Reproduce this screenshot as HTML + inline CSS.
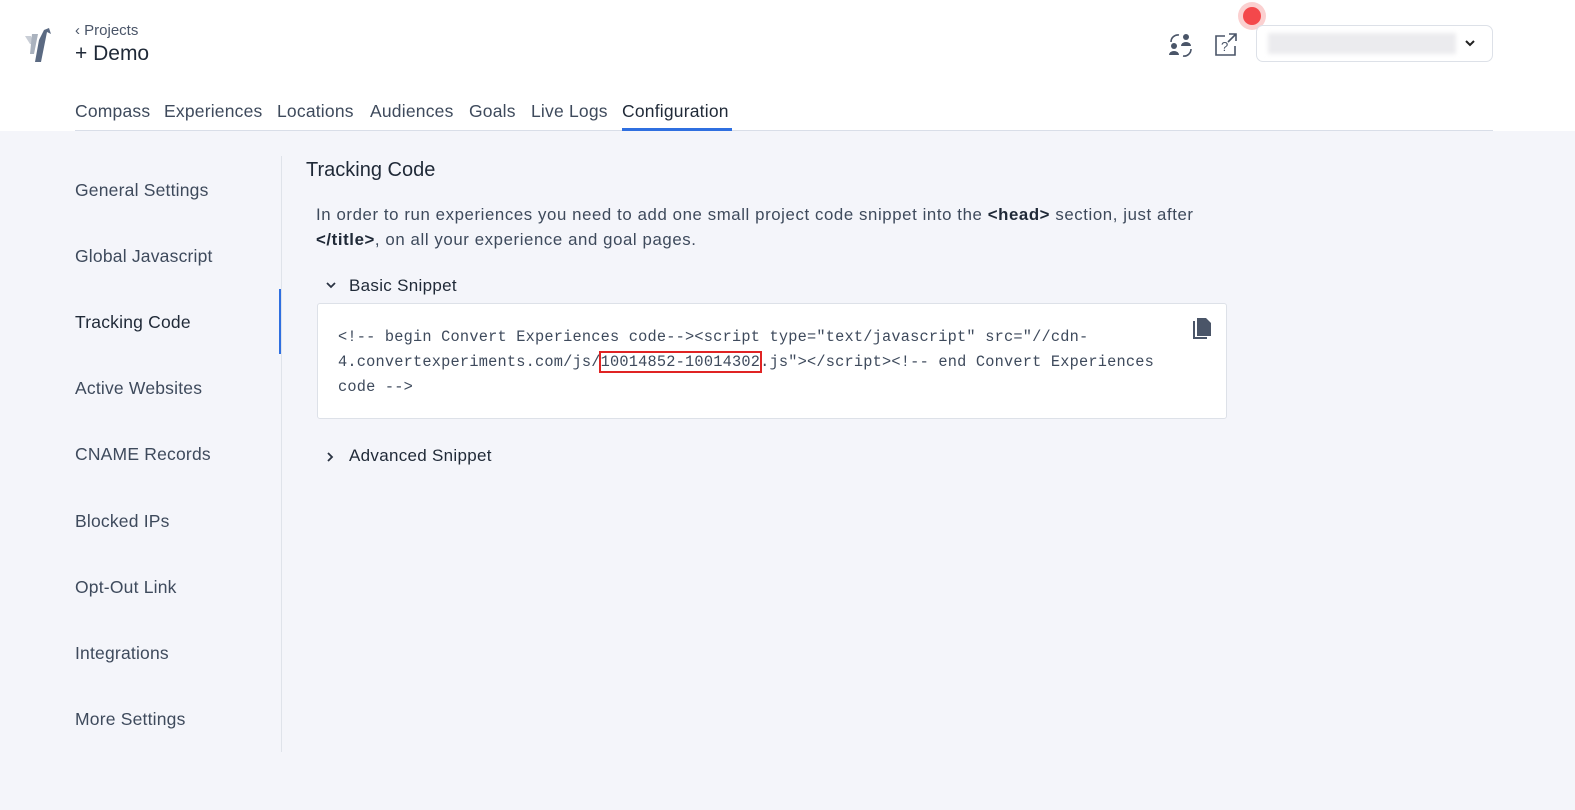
<!DOCTYPE html>
<html><head><meta charset="utf-8"><style>
*{box-sizing:border-box;margin:0;padding:0}
body{width:1575px;height:810px;background:#f4f5fa;font-family:"Liberation Sans",sans-serif;color:#2a3342;position:relative;overflow:hidden}
.top{position:absolute;left:0;top:0;width:1575px;height:131px;background:#fff}
.abs{position:absolute;white-space:nowrap}
.nav span{position:absolute;top:101px;font-size:17.5px;color:#3e4a5c;letter-spacing:0.2px}
.side{position:absolute;left:75px;font-size:17.5px;color:#3e4a5c;letter-spacing:0.2px}
</style></head><body>
<div class="top">
<svg class="abs" style="left:22px;top:24px" width="34" height="40" viewBox="0 0 34 40"><polygon points="3,12 9,12 12,20 8,20" fill="#c9ced6"/><polygon points="10,10 16,10 12,30 8,30" fill="#aab2be"/><polygon points="17,16 22,6 27,4 29,10 25,8 19,38 13,38" fill="#5b6a82"/></svg>
<div class="abs" style="left:75px;top:22px;font-size:15px;color:#4a5568">‹&nbsp;Projects</div>
<div class="abs" style="left:75px;top:42px;font-size:21px;color:#1f2937">+ Demo</div>
<div class="nav">
<span style="left:75px">Compass</span><span style="left:164px">Experiences</span><span style="left:277px">Locations</span><span style="left:370px">Audiences</span><span style="left:469px">Goals</span><span style="left:531px">Live Logs</span><span style="left:622px;color:#1f2937">Configuration</span>
</div>
<div class="abs" style="left:75px;top:130px;width:1418px;height:1px;background:#d9dee8"></div>
<div class="abs" style="left:622px;top:128px;width:110px;height:3px;background:#2f6fe0"></div>
<svg class="abs" style="left:1168px;top:32px" width="26" height="26" viewBox="0 0 26 26" fill="#4a5568"><circle cx="18" cy="5" r="3"/><path d="M13 14a5 4 0 0 1 10 0z"/><circle cx="6" cy="14" r="3"/><path d="M1 23a5 4 0 0 1 10 0z"/><path d="M3 10a7 7 0 0 1 8-7" stroke="#4a5568" stroke-width="1.6" fill="none"/><path d="M23 17a7 7 0 0 1-8 7" stroke="#4a5568" stroke-width="1.6" fill="none"/></svg>
<svg class="abs" style="left:1213px;top:32px" width="26" height="26" viewBox="0 0 26 26" fill="none" stroke="#4a5568" stroke-width="1.6"><path d="M12 4H3v19h19v-9"/><path d="M16 2h7v7M23 2l-8 8"/><text x="8" y="19" font-size="13" fill="#4a5568" stroke="none" font-family="Liberation Sans">?</text></svg>
<div class="abs" style="left:1238px;top:2px;width:28px;height:28px;border-radius:50%;background:#fbd0d0"></div>
<div class="abs" style="left:1243px;top:7px;width:18px;height:18px;border-radius:50%;background:#f4484b"></div>
<div class="abs" style="left:1256px;top:25px;width:237px;height:37px;border:1px solid #dde1e8;border-radius:7px;background:#fff"></div>
<div class="abs" style="left:1268px;top:33px;width:188px;height:21px;background:#ebebee;filter:blur(2px)"></div>
<svg class="abs" style="left:1464px;top:38px" width="12" height="10" viewBox="0 0 12 10"><path d="M2 3l4 4 4-4" stroke="#222" stroke-width="2" fill="none"/></svg>
</div>
<div class="side" style="top:180px">General Settings</div>
<div class="side" style="top:246px">Global Javascript</div>
<div class="side" style="top:312px;color:#1f2937">Tracking Code</div>
<div class="side" style="top:378px">Active Websites</div>
<div class="side" style="top:444px">CNAME Records</div>
<div class="side" style="top:511px">Blocked IPs</div>
<div class="side" style="top:577px">Opt-Out Link</div>
<div class="side" style="top:643px">Integrations</div>
<div class="side" style="top:709px">More Settings</div>
<div class="abs" style="left:281px;top:156px;width:1px;height:596px;background:#dfe3ea"></div>
<div class="abs" style="left:279px;top:289px;width:2px;height:65px;background:#2f6fe0"></div>
<div class="abs" style="left:306px;top:159px;font-size:20px;color:#1f2937">Tracking Code</div>
<div class="abs" style="left:316px;top:202px;font-size:16.8px;line-height:25px;color:#3e4a5c;letter-spacing:0.6px">In order to run experiences you need to add one small project code snippet into the <b style="color:#1f2937">&lt;head&gt;</b> section, just after<br><b style="color:#1f2937">&lt;/title&gt;</b>, on all your experience and goal pages.</div>
<svg class="abs" style="left:325px;top:280px" width="12" height="10" viewBox="0 0 12 10"><path d="M2 3l4 4 4-4" stroke="#2a3342" stroke-width="1.8" fill="none"/></svg>
<div class="abs" style="left:349px;top:276px;font-size:17px;color:#1f2937;letter-spacing:0.3px">Basic Snippet</div>
<div class="abs" style="left:317px;top:303px;width:910px;height:116px;background:#fff;border:1px solid #dde1e8;border-radius:3px"></div>
<div class="abs" style="left:338px;top:325px;font-family:'Liberation Mono',monospace;font-size:15.3px;letter-spacing:0.2px;line-height:25px;color:#3e4a5c">&lt;!-- begin Convert Experiences code--&gt;&lt;script type="text/javascript" src="//cdn-<br>4.convertexperiments.com/js/<span style="outline:2px solid #e02424;outline-offset:0">10014852-10014302</span>.js"&gt;&lt;/script&gt;&lt;!-- end Convert Experiences<br>code --&gt;</div>
<svg class="abs" style="left:1189px;top:316px" width="24" height="26" viewBox="0 0 24 26" fill="#4a5568"><path d="M4 5h2v16h12v2H4z"/><path d="M8 2h9l5 5v13H8z"/></svg>
<svg class="abs" style="left:325px;top:451px" width="10" height="12" viewBox="0 0 10 12"><path d="M3 2l4 4-4 4" stroke="#2a3342" stroke-width="1.8" fill="none"/></svg>
<div class="abs" style="left:349px;top:446px;font-size:17px;color:#1f2937;letter-spacing:0.3px">Advanced Snippet</div>
</body></html>
